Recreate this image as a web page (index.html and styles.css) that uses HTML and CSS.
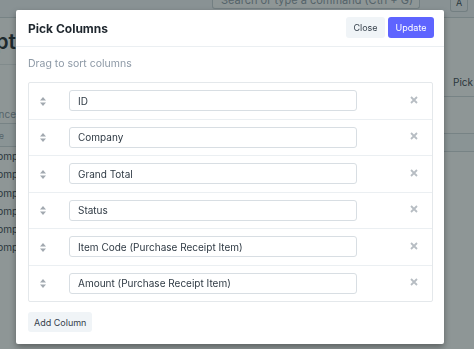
FILE: index.html
```html
<!DOCTYPE html>
<html lang="en">
<head>
  <meta charset="UTF-8">
  <title>Pick Columns</title>
  <link rel="stylesheet" href="styles.css">
</head>
<body>

<div class="page">
  <div class="navbar">
    <div class="search">
      <span>Search or type a command (Ctrl + G)</span>
      <svg class="search-icon" width="10" height="10" viewBox="0 0 10 10"><circle cx="4" cy="4" r="3" fill="none" stroke="#555" stroke-width="1.2"/><path d="M6.3 6.3 L9 9" stroke="#555" stroke-width="1.2"/></svg>
    </div>
    <div class="avatar">A</div>
  </div>

  <div class="page-body">
    <div class="side left">
      <div class="page-title"><span>Purchase Receipt</span></div>
      <div class="filter"><span>Reference</span></div>
      <div class="col-head"><span>Title</span></div>
      <div class="list-rows">
        <div>Company</div>
        <div>Company</div>
        <div>Company</div>
        <div>Company</div>
        <div>Company</div>
        <div>Company</div>
      </div>
    </div>
    <div class="gap"></div>
    <div class="side right">
      <div class="toolbar"><span>Pick Columns</span></div>
      <div class="band"></div>
      <div class="band thin"></div>
    </div>
  </div>
</div>

<div class="backdrop"></div>

<div class="modal">
  <div class="modal-header">
    <h4>Pick Columns</h4>
    <div class="actions">
      <button class="btn">Close</button>
      <button class="btn primary">Update</button>
    </div>
  </div>

  <div class="modal-body">
    <p class="hint">Drag to sort columns</p>

    <div class="columns">
      <div class="column-row">
        <span class="drag"><svg width="6" height="9" viewBox="0 0 6 9"><path d="M3 0 L6 3.5 H0 Z M3 9 L6 5.5 H0 Z" fill="#a2a9b0"/></svg></span>
        <input type="text" value="ID">
        <span class="remove"><svg width="8" height="8" viewBox="0 0 8 8"><path d="M1 1 L7 7 M7 1 L1 7" stroke="#b7bdc3" stroke-width="1.8"/></svg></span>
      </div>
      <div class="column-row">
        <span class="drag"><svg width="6" height="9" viewBox="0 0 6 9"><path d="M3 0 L6 3.5 H0 Z M3 9 L6 5.5 H0 Z" fill="#a2a9b0"/></svg></span>
        <input type="text" value="Company">
        <span class="remove"><svg width="8" height="8" viewBox="0 0 8 8"><path d="M1 1 L7 7 M7 1 L1 7" stroke="#b7bdc3" stroke-width="1.8"/></svg></span>
      </div>
      <div class="column-row">
        <span class="drag"><svg width="6" height="9" viewBox="0 0 6 9"><path d="M3 0 L6 3.5 H0 Z M3 9 L6 5.5 H0 Z" fill="#a2a9b0"/></svg></span>
        <input type="text" value="Grand Total">
        <span class="remove"><svg width="8" height="8" viewBox="0 0 8 8"><path d="M1 1 L7 7 M7 1 L1 7" stroke="#b7bdc3" stroke-width="1.8"/></svg></span>
      </div>
      <div class="column-row">
        <span class="drag"><svg width="6" height="9" viewBox="0 0 6 9"><path d="M3 0 L6 3.5 H0 Z M3 9 L6 5.5 H0 Z" fill="#a2a9b0"/></svg></span>
        <input type="text" value="Status">
        <span class="remove"><svg width="8" height="8" viewBox="0 0 8 8"><path d="M1 1 L7 7 M7 1 L1 7" stroke="#b7bdc3" stroke-width="1.8"/></svg></span>
      </div>
      <div class="column-row">
        <span class="drag"><svg width="6" height="9" viewBox="0 0 6 9"><path d="M3 0 L6 3.5 H0 Z M3 9 L6 5.5 H0 Z" fill="#a2a9b0"/></svg></span>
        <input type="text" value="Item Code (Purchase Receipt Item)">
        <span class="remove"><svg width="8" height="8" viewBox="0 0 8 8"><path d="M1 1 L7 7 M7 1 L1 7" stroke="#b7bdc3" stroke-width="1.8"/></svg></span>
      </div>
      <div class="column-row">
        <span class="drag"><svg width="6" height="9" viewBox="0 0 6 9"><path d="M3 0 L6 3.5 H0 Z M3 9 L6 5.5 H0 Z" fill="#a2a9b0"/></svg></span>
        <input type="text" value="Amount (Purchase Receipt Item)">
        <span class="remove"><svg width="8" height="8" viewBox="0 0 8 8"><path d="M1 1 L7 7 M7 1 L1 7" stroke="#b7bdc3" stroke-width="1.8"/></svg></span>
      </div>
    </div>

    <button class="btn add">Add Column</button>
  </div>
</div>

</body>
</html>
```

FILE: styles.css
```css
body {
  margin: 0;
  width: 474px;
  height: 349px;
  overflow: hidden;
  font-family: Inter, "Noto Sans", sans-serif;
  color: #36414c;
  background: #fff;
}

/* page behind the dialog */

.page {
  height: 349px;
  background: #fff;
}

.navbar {
  height: 17px;
  display: flex;
  align-items: flex-end;
  border-bottom: 1px solid #d1d8dd;
  background: #f5f7fa;
}

.search {
  width: 208px;
  height: 14px;
  margin-left: 212px;
  margin-bottom: 8px;
  display: flex;
  align-items: flex-end;
  justify-content: space-between;
  padding: 0 6px 2px 8px;
  box-sizing: border-box;
  border: 1px solid #c9d0d6;
  border-top: none;
  border-radius: 0 0 3px 3px;
  background: #fff;
  font-size: 11px;
  line-height: 11px;
  color: #8d99a6;
  white-space: nowrap;
}

.avatar {
  width: 16px;
  height: 14px;
  margin-left: 30px;
  margin-bottom: 5px;
  border: 1px solid #c9d0d6;
  border-top: none;
  border-radius: 0 0 3px 3px;
  font-size: 9px;
  text-align: center;
  line-height: 12px;
  overflow: hidden;
}

.page-body {
  display: flex;
}

.side {
  overflow: hidden;
}

.left {
  width: 16px;
}

.gap {
  flex: 1;
}

.right {
  width: 30px;
}

.page-title {
  height: 46px;
  display: flex;
  justify-content: flex-end;
  align-items: center;
  font-size: 21px;
  font-weight: 600;
  white-space: nowrap;
  color: #1f272e;
  border-bottom: 1px solid #e4e8eb;
}

.filter {
  height: 59px;
  display: flex;
  justify-content: flex-end;
  align-items: flex-end;
  padding-bottom: 3px;
  box-sizing: border-box;
  font-size: 10px;
  color: #8d99a6;
  white-space: nowrap;
  border-bottom: 1px solid #d1d8dd;
}

.col-head {
  height: 22px;
  display: flex;
  justify-content: flex-end;
  align-items: center;
  padding-right: 12px;
  font-size: 9px;
  color: #8d99a6;
  border-bottom: 1px solid #d1d8dd;
  background: #f7fafc;
}

.list-rows div {
  height: 18.3px;
  line-height: 18px;
  font-size: 10px;
  margin-left: -10px;
  white-space: nowrap;
}

.toolbar {
  height: 79px;
  display: flex;
  align-items: flex-start;
  padding: 58px 0 0 9px;
  box-sizing: border-box;
  font-size: 10px;
  line-height: 12px;
  white-space: nowrap;
  border-bottom: 1px solid #d1d8dd;
}

.band {
  height: 36px;
  border-bottom: 1px solid #d1d8dd;
}

.band.thin {
  height: 17px;
  background: #f7fafc;
}

.backdrop {
  position: fixed;
  inset: 0;
  background: rgba(30, 45, 45, 0.5);
}

/* dialog */

.modal {
  position: fixed;
  left: 16px;
  top: 10px;
  width: 428px;
  height: 334px;
  background: #fff;
  border-radius: 2px;
  box-shadow: 0 3px 6px rgba(0, 0, 0, 0.35);
  display: flex;
  flex-direction: column;
}

.modal-header {
  height: 36px;
  display: flex;
  align-items: center;
  justify-content: space-between;
  padding: 0 10px 0 12px;
  border-bottom: 1px solid #ebeff2;
}

h4 {
  margin: 0;
  font-size: 12px;
  font-weight: 700;
  color: #1f272e;
}

.actions {
  display: flex;
  gap: 3px;
  margin-top: -2px;
}

.btn {
  height: 21px;
  padding: 0 7.5px;
  border: none;
  border-radius: 3px;
  background: #f0f4f7;
  color: #36414c;
  font-family: inherit;
  font-size: 9px;
  cursor: pointer;
}

.btn.primary {
  background: #5e64ff;
  color: #fff;
}

.modal-body {
  padding: 10px 11px 0 12px;
}

.hint {
  margin: 0 0 11px;
  font-size: 10.5px;
  line-height: 14px;
  color: #8d99a6;
}

.columns {
  border: 1px solid #e4e8eb;
  border-radius: 2px;
}

.column-row {
  height: 35.5px;
  display: flex;
  align-items: center;
  border-bottom: 1px solid #ebeff2;
}

.column-row:last-child {
  border-bottom: none;
}

.drag {
  width: 28px;
  margin-right: 12px;
  display: flex;
  justify-content: center;
  margin-top: 1px;
}

.column-row input {
  width: 288px;
  height: 21px;
  box-sizing: border-box;
  padding: 0 8px;
  border: 1px solid #d8dee3;
  border-radius: 3px;
  font-family: inherit;
  font-size: 10px;
  color: #2f3a44;
}

.remove {
  margin-left: auto;
  margin-right: 14px;
  display: flex;
  margin-top: -2px;
}

.btn.add {
  margin-top: 10px;
  height: 20px;
  padding: 0 6px;
}
```
